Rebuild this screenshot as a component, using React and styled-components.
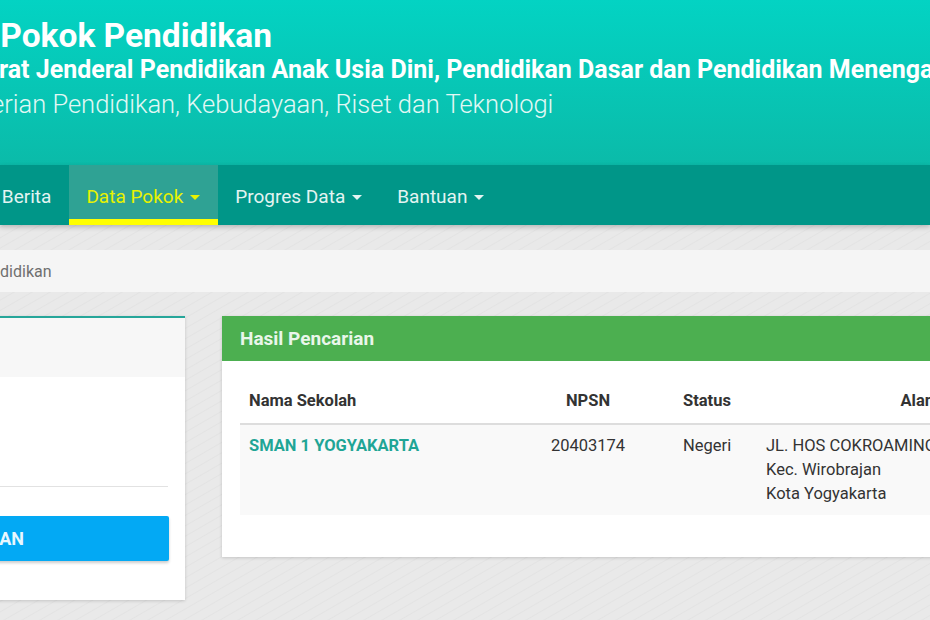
import React from "react";
import styled, { createGlobalStyle } from "styled-components";

const GlobalStyle = createGlobalStyle`
  html, body { margin: 0; padding: 0; }
  body {
    font-family: Roboto, "Noto Sans", "Liberation Sans", sans-serif;
    background-color: #e8e8e8;
    background-image: repeating-linear-gradient(
      150deg,
      #e9e9e9 0px,
      #e9e9e9 7px,
      #e3e3e3 8px,
      #e9e9e9 9px
    );
    overflow: hidden;
  }
`;

const Viewport = styled.div`
  width: 930px;
  height: 620px;
  overflow: hidden;
`;

/* the page is a crop: its container starts left of the visible area */
const Container = styled.div`
  width: 1235px;
  margin-left: -120px;
`;

const Header = styled.header`
  height: 165px;
  background: linear-gradient(180deg, #03d3c3 0%, #0bbba9 100%);
  overflow: hidden;
`;

const Brand = styled.div`
  display: flex;
  align-items: flex-start;
  gap: 8px;
  padding-top: 17px;
`;

const Logo = styled.svg`
  width: 30px;
  height: 30px;
  flex: none;
`;

const Titles = styled.div`
  color: #ffffff;
  white-space: nowrap;
`;

const Title = styled.h1`
  margin: 0 0 0 5px;
  font-size: 33.5px;
  line-height: 38px;
  font-weight: 700;
`;

const Subtitle = styled.h2`
  margin: 0;
  font-size: 25px;
  line-height: 30px;
  font-weight: 700;
`;

const Ministry = styled.div`
  margin: 4px 0 0 -14px;
  font-size: 25.5px;
  line-height: 30px;
  font-weight: 300;
  color: #e2f8f5;
`;

const NavBar = styled.nav`
  height: 60px;
  background: #009688;
  box-shadow: 0 2px 5px rgba(0, 0, 0, 0.22);
  position: relative;
`;

const NavList = styled.ul`
  display: flex;
  margin: 0;
  padding: 0;
  list-style: none;
  height: 60px;
`;

const NavItem = styled.li`
  display: flex;
  align-items: center;
  gap: 7px;
  height: 60px;
  box-sizing: border-box;
  padding: 9px 18px 0 17px;
  font-size: 19px;
  color: ${(p) => (p.$active ? "#e8f200" : "#e3f4f2")};
  background: ${(p) => (p.$active ? "#2fa294" : "transparent")};
  border-bottom: 6px solid ${(p) => (p.$active ? "#ffff00" : "transparent")};
  white-space: nowrap;
`;

const Caret = styled.span`
  width: 0;
  height: 0;
  border-left: 5px solid transparent;
  border-right: 5px solid transparent;
  border-top: 5px solid currentColor;
  margin-top: 2px;
`;

const Breadcrumb = styled.div`
  margin-top: 25px;
  height: 42px;
  display: flex;
  align-items: center;
  gap: 8px;
  background: #f5f5f5;
  padding: 0 15px;
  font-size: 16px;
  color: #6f6f6f;
  white-space: nowrap;
`;

const HomeIcon = styled.svg`
  width: 16px;
  height: 16px;
  flex: none;
`;

const Main = styled.main`
  display: grid;
  grid-template-columns: 305px 893px;
  column-gap: 37px;
  align-items: start;
  margin-top: 24px;
`;

const SearchPanel = styled.section`
  background: #fff;
  border-top: 2px solid #26a69a;
  box-shadow: 0 1px 3px rgba(0, 0, 0, 0.16);
`;

const SearchHead = styled.div`
  height: 59px;
  background: #f7f7f7;
`;

const SearchBody = styled.div`
  padding: 0 16px 39px 15px;
`;

const Spacer = styled.div`
  height: 109px;
`;

const Divider = styled.hr`
  margin: 0 1px 29px 0;
  border: 0;
  border-top: 1px solid #e2e2e2;
`;

const SearchButton = styled.button`
  display: flex;
  align-items: center;
  width: 100%;
  height: 45px;
  border: 0;
  border-radius: 2px;
  background: #03a9f4;
  color: #e9f7fe;
  font-family: Roboto, "Noto Sans", sans-serif;
  font-weight: 700;
  font-size: 18px;
  padding: 0 0 0 29px;
  box-shadow: 0 2px 3px rgba(0, 0, 0, 0.2);
`;

const ResultPanel = styled.section`
  background: #fff;
  box-shadow: 0 1px 3px rgba(0, 0, 0, 0.16);
`;

const ResultHead = styled.div`
  height: 45px;
  display: flex;
  align-items: center;
  padding: 0 18px;
  background: #4caf50;
  color: #e9f6ea;
  font-size: 19px;
  font-weight: 700;
`;

const ResultBody = styled.div`
  padding: 18px 18px 42px;
`;

const Table = styled.table`
  width: 857px;
  table-layout: fixed;
  border-collapse: collapse;
  font-size: 16.5px;
  color: #333;
`;

const Th = styled.th`
  padding: 10px 9px;
  line-height: 24px;
  font-weight: 700;
  text-align: ${(p) => p.$align || "left"};
  border-bottom: 2px solid #dddddd;
  white-space: nowrap;
`;

const Row = styled.tr`
  background: #f9f9f9;
`;

const Td = styled.td`
  padding: 9px 9px 9px;
  line-height: 24px;
  vertical-align: top;
  text-align: ${(p) => p.$align || "left"};
  white-space: nowrap;
`;

const SchoolLink = styled.a`
  color: #1fa596;
  font-weight: 700;
  text-decoration: none;
`;

export default function App() {
  return (
    <>
      <GlobalStyle />
      <Viewport>
        <Header>
          <Container>
            <Brand>
              <Logo viewBox="0 0 30 30" aria-hidden="true">
                <circle cx="15" cy="15" r="14" fill="#ffffff" opacity="0.9" />
                <circle cx="15" cy="15" r="8" fill="#00c4b4" />
              </Logo>
              <Titles>
                <Title>Data Pokok Pendidikan</Title>
                <Subtitle>
                  Direktorat Jenderal Pendidikan Anak Usia Dini, Pendidikan Dasar dan Pendidikan Menengah
                </Subtitle>
                <Ministry>Kementerian Pendidikan, Kebudayaan, Riset dan Teknologi</Ministry>
              </Titles>
            </Brand>
          </Container>
        </Header>
        <NavBar>
          <Container>
            <NavList>
              <NavItem>Beranda</NavItem>
              <NavItem>Berita</NavItem>
              <NavItem $active>
                Data Pokok <Caret />
              </NavItem>
              <NavItem>
                Progres Data <Caret />
              </NavItem>
              <NavItem>
                Bantuan <Caret />
              </NavItem>
            </NavList>
          </Container>
        </NavBar>
        <Container>
          <Breadcrumb>
            <HomeIcon viewBox="0 0 16 16" aria-hidden="true">
              <path d="M2 8 L8 2.5 L14 8 M4 7 V13.5 H12 V7" fill="none" stroke="#888" strokeWidth="1.5" />
            </HomeIcon>
            Satuan Pendidikan
          </Breadcrumb>
          <Main>
            <SearchPanel>
              <SearchHead />
              <SearchBody>
                <Spacer />
                <Divider />
                <SearchButton>PENCARIAN</SearchButton>
              </SearchBody>
            </SearchPanel>
            <ResultPanel>
              <ResultHead>Hasil Pencarian</ResultHead>
              <ResultBody>
                <Table>
                  <colgroup>
                    <col style={{ width: 262 }} />
                    <col style={{ width: 172 }} />
                    <col style={{ width: 83 }} />
                    <col style={{ width: 340 }} />
                  </colgroup>
                  <thead>
                    <tr>
                      <Th>Nama Sekolah</Th>
                      <Th $align="center">NPSN</Th>
                      <Th>Status</Th>
                      <Th $align="center">Alamat</Th>
                    </tr>
                  </thead>
                  <tbody>
                    <Row>
                      <Td>
                        <SchoolLink href="#">SMAN 1 YOGYAKARTA</SchoolLink>
                      </Td>
                      <Td $align="center">20403174</Td>
                      <Td>Negeri</Td>
                      <Td>
                        JL. HOS COKROAMINOTO NO. 10
                        <br />
                        Kec. Wirobrajan
                        <br />
                        Kota Yogyakarta
                      </Td>
                    </Row>
                  </tbody>
                </Table>
              </ResultBody>
            </ResultPanel>
          </Main>
        </Container>
      </Viewport>
    </>
  );
}
